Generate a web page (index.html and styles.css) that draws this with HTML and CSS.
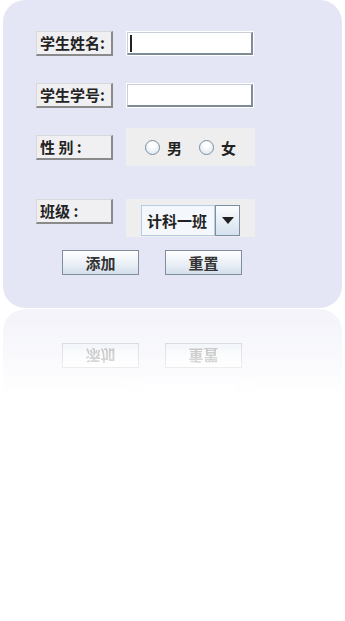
FILE: index.html
```html
<!DOCTYPE html>
<html lang="zh">
<head>
    <meta charset="UTF-8">
    <meta name="viewport" content="width=device-width, initial-scale=1.0">
    <title>添加学生</title>
    <link rel="stylesheet" href="styles.css">
</head>
<body>
    <div class="card">
        <div class="row">
            <label class="tag" for="name">学生姓名:</label>
            <div class="field"><input type="text" id="name"><span class="caret"></span></div>
        </div>
        <div class="row">
            <label class="tag" for="num">学生学号:</label>
            <div class="field"><input type="text" id="num"></div>
        </div>
        <div class="row row-sex">
            <span class="tag">性 别 :</span>
            <div class="panel sex">
                <label class="radio"><span class="dot"></span>男</label>
                <label class="radio"><span class="dot"></span>女</label>
            </div>
        </div>
        <div class="row row-class">
            <span class="tag">班级 :</span>
            <div class="panel cls">
                <div class="combo">
                    <span class="combo-text">计科一班</span>
                    <span class="combo-btn"><span class="tri"></span></span>
                </div>
            </div>
        </div>
        <div class="buttons">
            <button class="btn">添加</button>
            <button class="btn">重置</button>
        </div>
    </div>

    <!-- 倒影 -->
    <div class="mirror" aria-hidden="true">
        <div class="buttons">
            <span class="btn flip">添加</span>
            <span class="btn flip">重置</span>
        </div>
        <div class="mirror-panel">
            <span class="mirror-combo"></span>
        </div>
    </div>
</body>
</html>
```

FILE: styles.css
```css
body {
    margin: 0;
    background: #fff;
    font-family: "Noto Sans CJK SC", "DejaVu Sans", sans-serif;
}
.card {
    width: 339px;
    height: 308px;
    margin-left: 3px;
    box-sizing: border-box;
    padding: 31px 0 0 33px;
    background: #e5e6f5;
    border-radius: 22px;
}
.row {
    display: flex;
    align-items: flex-start;
    gap: 13px;
    margin-bottom: 27px;
}
.tag {
    width: 77px;
    height: 25px;
    box-sizing: border-box;
    padding-left: 3px;
    background: #f0f0f2;
    border-top: 1px solid #d8d8d8;
    border-left: 1px solid #d8d8d8;
    border-right: 2px solid #8a8a8a;
    border-bottom: 2px solid #8a8a8a;
    font-size: 15px;
    font-weight: bold;
    line-height: 22px;
    color: #222;
    white-space: pre;
}
.field {
    position: relative;
    width: 128px;
    height: 25px;
    box-sizing: border-box;
    border: 1px solid #fff;
}
.field input {
    display: block;
    width: 100%;
    height: 100%;
    box-sizing: border-box;
    margin: 0;
    background: #fff;
    border-top: 1px solid #c9cfd6;
    border-left: 1px solid #c9cfd6;
    border-right: 2px solid #7f8c97;
    border-bottom: 2px solid #7f8c97;
    outline: none;
}
.caret {
    position: absolute;
    left: 3px;
    top: 3px;
    width: 2px;
    height: 17px;
    background: #222;
}
.row-sex {
    margin-top: -7px;
    margin-bottom: 33px;
}
.row-sex .tag {
    margin-top: 7px;
}
.panel {
    width: 129px;
    height: 38px;
    background: #eeeeee;
}
.sex {
    display: flex;
    align-items: center;
    padding-left: 19px;
    gap: 17px;
    box-sizing: border-box;
}
.radio {
    display: flex;
    align-items: center;
    gap: 7px;
    font-size: 15px;
    font-weight: bold;
    color: #222;
}
.dot {
    width: 13px;
    height: 13px;
    border-radius: 50%;
    border: 1px solid #7c8ea0;
    background: radial-gradient(circle at 50% 30%, #fff 20%, #dce6ef 90%);
}
.row-class {
    margin-bottom: 13px;
}
.cls {
    display: flex;
    align-items: flex-end;
    padding: 0 0 1px 15px;
    box-sizing: border-box;
}
.combo {
    display: flex;
    height: 31px;
}
.combo-text {
    width: 74px;
    box-sizing: border-box;
    background: #f4f7fb;
    border: 1px solid #b5cce2;
    padding-left: 5px;
    font-size: 15px;
    font-weight: bold;
    line-height: 29px;
    color: #222;
}
.combo-btn {
    width: 25px;
    box-sizing: border-box;
    border: 1px solid #7c8ea0;
    background: linear-gradient(#fbfcfe, #d5e1ee);
    display: flex;
    align-items: center;
    justify-content: center;
}
.tri {
    width: 0;
    height: 0;
    border-left: 6px solid transparent;
    border-right: 6px solid transparent;
    border-top: 7px solid #222;
}
.buttons {
    display: flex;
    gap: 26px;
    padding-left: 26px;
}
.btn {
    width: 77px;
    height: 25px;
    box-sizing: border-box;
    padding: 0;
    border: 1px solid #7f8e9c;
    background: linear-gradient(#ffffff, #e8eef5 60%, #d3dfeb);
    font-family: "Noto Sans CJK SC", sans-serif;
    font-size: 15px;
    font-weight: bold;
    color: #333;
    line-height: 22px;
    text-align: center;
}

/* 倒影 */
.mirror {
    width: 339px;
    height: 88px;
    margin: 1px 0 0 3px;
    box-sizing: border-box;
    padding: 34px 0 0 33px;
    background: #e5e6f5;
    border-radius: 22px 22px 0 0;
    overflow: hidden;
    opacity: 0.42;
    -webkit-mask-image: linear-gradient(#000 15%, transparent 98%);
    mask-image: linear-gradient(#000 15%, transparent 98%);
}
.flip {
    transform: scaleY(-1);
}
.mirror-panel {
    width: 129px;
    height: 40px;
    margin: 13px 0 0 90px;
    padding: 1px 0 0 15px;
    box-sizing: border-box;
    background: #eeeeee;
}
.mirror-combo {
    display: block;
    width: 99px;
    height: 31px;
    box-sizing: border-box;
    border: 1px solid #b5cce2;
    background: #f4f7fb;
}
```
